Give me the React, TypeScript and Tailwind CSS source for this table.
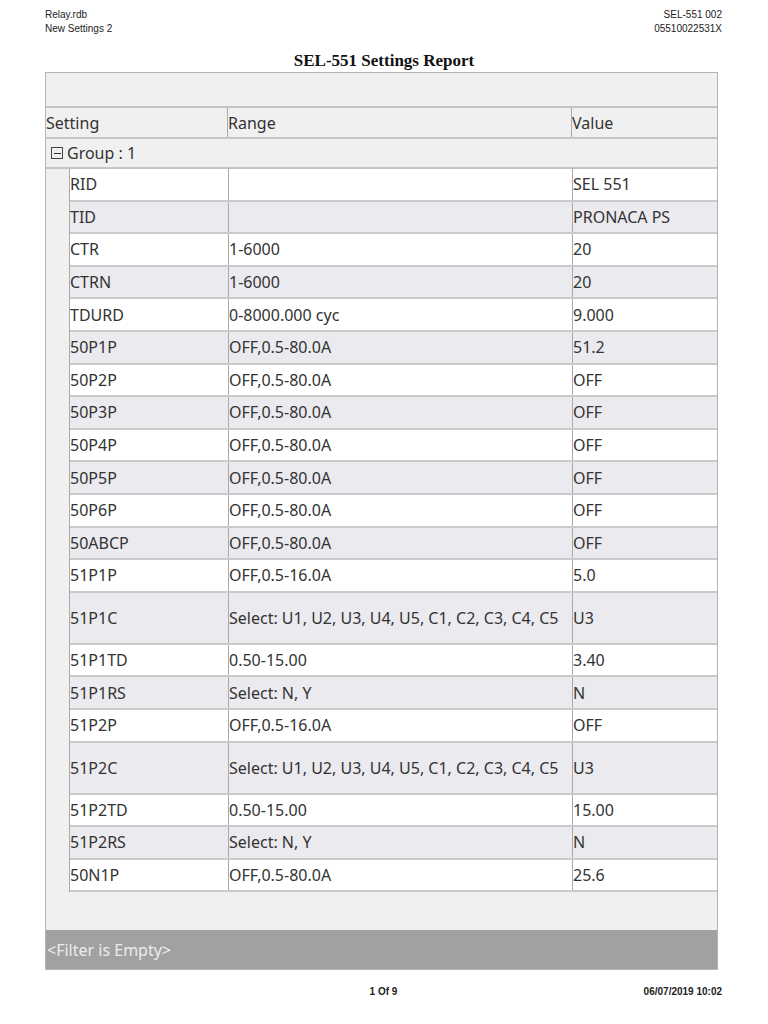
import React from 'react';

type Row = { name: string; range: string; value: string; tall?: boolean };

const rows: Row[] = [
  { name: 'RID', range: '', value: 'SEL 551' },
  { name: 'TID', range: '', value: 'PRONACA PS' },
  { name: 'CTR', range: '1-6000', value: '20' },
  { name: 'CTRN', range: '1-6000', value: '20' },
  { name: 'TDURD', range: '0-8000.000 cyc', value: '9.000' },
  { name: '50P1P', range: 'OFF,0.5-80.0A', value: '51.2' },
  { name: '50P2P', range: 'OFF,0.5-80.0A', value: 'OFF' },
  { name: '50P3P', range: 'OFF,0.5-80.0A', value: 'OFF' },
  { name: '50P4P', range: 'OFF,0.5-80.0A', value: 'OFF' },
  { name: '50P5P', range: 'OFF,0.5-80.0A', value: 'OFF' },
  { name: '50P6P', range: 'OFF,0.5-80.0A', value: 'OFF' },
  { name: '50ABCP', range: 'OFF,0.5-80.0A', value: 'OFF' },
  { name: '51P1P', range: 'OFF,0.5-16.0A', value: '5.0' },
  { name: '51P1C', range: 'Select: U1, U2, U3, U4, U5, C1, C2, C3, C4, C5', value: 'U3', tall: true },
  { name: '51P1TD', range: '0.50-15.00', value: '3.40' },
  { name: '51P1RS', range: 'Select: N, Y', value: 'N' },
  { name: '51P2P', range: 'OFF,0.5-16.0A', value: 'OFF' },
  { name: '51P2C', range: 'Select: U1, U2, U3, U4, U5, C1, C2, C3, C4, C5', value: 'U3', tall: true },
  { name: '51P2TD', range: '0.50-15.00', value: '15.00' },
  { name: '51P2RS', range: 'Select: N, Y', value: 'N' },
  { name: '50N1P', range: 'OFF,0.5-80.0A', value: '25.6' },
];

const cellFont = { fontFamily: '"Noto Sans", sans-serif' };

export default function App() {
  return (
    <div className="w-[768px] h-[1024px] bg-white text-[#2a2a2a] flex flex-col">
      {/* page header */}
      <div
        className="flex justify-between pl-[45px] pr-[46px] pt-[8px] text-[10px] leading-[14px] text-[#222]"
        style={{ fontFamily: '"Liberation Sans Narrow", "Liberation Sans", sans-serif' }}
      >
        <div>
          <div>Relay.rdb</div>
          <div>New Settings 2</div>
        </div>
        <div className="text-right">
          <div>SEL-551 002</div>
          <div>05510022531X</div>
        </div>
      </div>

      <h1
        className="text-center text-[17px] leading-[22px] font-bold mt-[14px] text-[#111]"
        style={{ fontFamily: '"Liberation Serif", serif' }}
      >
        SEL-551 Settings Report
      </h1>

      {/* report table */}
      <div
        className="mx-[45px] w-[673px] border border-[#b4b4b4] text-[16px] bg-[#f0f0f0] text-[#333]"
        style={cellFont}
      >
        <div className="h-[35px] border-b-2 border-[#c4c4c4]" />

        <div className="flex h-[31px] border-b-2 border-[#c4c4c4] items-center">
          <div className="w-[181px] h-full flex items-center">Setting</div>
          <div className="w-[344px] h-full flex items-center border-l border-[#aaa]">Range</div>
          <div className="flex-1 h-full flex items-center border-l border-[#aaa]">Value</div>
        </div>

        <div className="flex h-[30px] items-center border-b-2 border-[#c4c4c4] pl-[5px]">
          <span className="w-[12px] h-[12px] border border-[#444] flex items-center justify-center mr-[4px]">
            <span className="w-[7px] h-px bg-[#333]" />
          </span>
          <span>Group : 1</span>
        </div>

        <div className="flex">
          <div className="w-[23px] shrink-0" />
          <div className="flex-1 border-l border-[#aaa]">
            {rows.map((r, i) => (
              <div
                key={r.name}
                className={`flex border-b-2 border-[#cacaca] ${r.tall ? 'h-[52px]' : 'h-[32.6px]'} ${
                  i % 2 === 0 ? 'bg-white' : 'bg-[#ebeaef]'
                }`}
              >
                <div className="w-[158px] flex items-center">{r.name}</div>
                <div className="w-[344px] flex items-center border-l border-[#aaa]">{r.range}</div>
                <div className="flex-1 flex items-center border-l border-[#aaa]">{r.value}</div>
              </div>
            ))}
          </div>
        </div>

        <div className="h-[38px]" />
        <div className="h-[39px] bg-[#a1a1a1] text-[#ececec] text-[16px] flex items-center pl-[1px]">
          &lt;Filter is Empty&gt;
        </div>
      </div>

      {/* page footer */}
      <div
        className="flex pl-[45px] pr-[46px] mt-[15px] text-[10px] leading-[14px] font-bold text-[#222]"
        style={{ fontFamily: '"Liberation Sans Narrow", "Liberation Sans", sans-serif' }}
      >
        <div className="flex-1" />
        <div className="flex-1 text-center">1 Of 9</div>
        <div className="flex-1 text-right">06/07/2019 10:02</div>
      </div>
    </div>
  );
}
